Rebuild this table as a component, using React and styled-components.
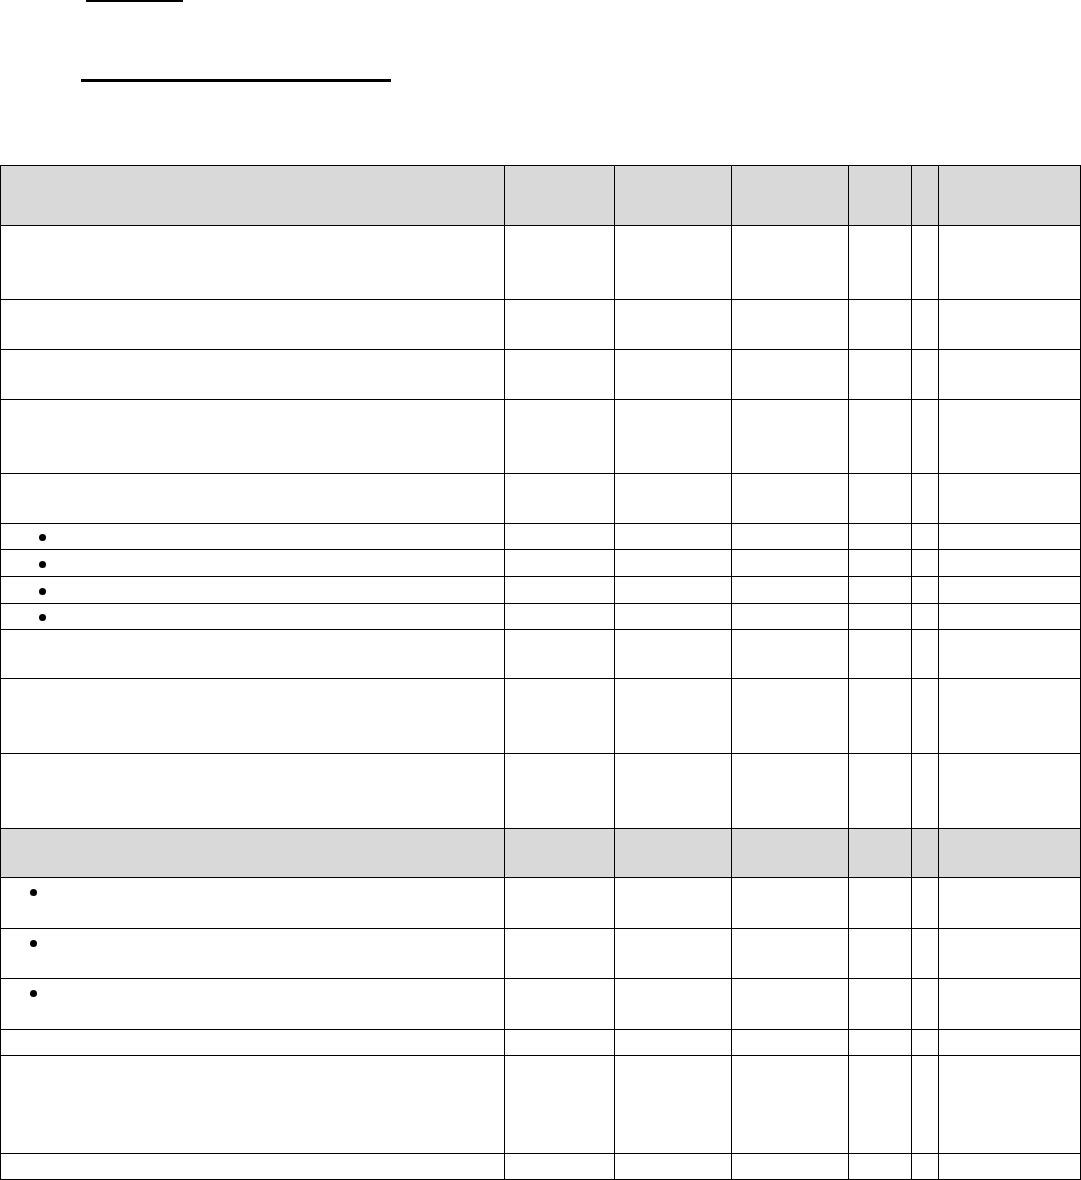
import React from "react";
import styled, { createGlobalStyle } from "styled-components";

const Global = createGlobalStyle`
  html, body { margin: 0; padding: 0; background: #ffffff; }
  body { font-family: "Liberation Sans", Arial, sans-serif; font-size: 14px; color: #000; }
`;

const Page = styled.div`
  width: 1081px;
  display: flex;
  flex-direction: column;
`;

const Heading = styled.div`
  margin-left: ${(p) => p.$left}px;
  margin-top: ${(p) => p.$top}px;
  width: ${(p) => p.$width}px;
  height: ${(p) => p.$height}px;
  border-bottom: ${(p) => p.$thick}px solid #000;
  box-sizing: border-box;
  color: transparent;
  font-size: 0;
  line-height: 0;
`;

const Table = styled.div`
  margin-top: ${(p) => p.$top}px;
  border-top: 1px solid #000;
  border-left: 1px solid #000;
  display: flex;
  flex-direction: column;
`;

const COLS = "504px 110px 117px 117px 63px 27px 142px";

const Row = styled.div`
  display: grid;
  grid-template-columns: ${COLS};
  height: ${(p) => p.$h}px;
  background: ${(p) => (p.$shade ? "#d9d9d9" : "#ffffff")};
`;

const Cell = styled.div`
  box-sizing: border-box;
  border-right: 1px solid #000;
  border-bottom: 1px solid #000;
  display: flex;
  align-items: ${(p) => (p.$kind === "outer" ? "flex-start" : "center")};
  padding-left: ${(p) => (p.$kind === "outer" ? 29 : p.$kind === "inner" ? 38 : 0)}px;
  padding-top: ${(p) => (p.$kind === "outer" ? 11 : 0)}px;
`;

const Bullet = styled.span`
  display: inline-block;
  width: 7px;
  height: 7px;
  border-radius: 50%;
  background: #000;
  margin-top: ${(p) => (p.$kind === "inner" ? 2 : 0)}px;
`;

const rows = [
  { h: 60, shade: true },
  { h: 74 },
  { h: 50 },
  { h: 50 },
  { h: 74 },
  { h: 50 },
  { h: 26, bullet: "inner" },
  { h: 27, bullet: "inner" },
  { h: 27, bullet: "inner" },
  { h: 26, bullet: "inner" },
  { h: 49 },
  { h: 75 },
  { h: 75 },
  { h: 49, shade: true },
  { h: 51, bullet: "outer" },
  { h: 50, bullet: "outer" },
  { h: 51, bullet: "outer" },
  { h: 26 },
  { h: 98 },
  { h: 26 },
];

export default function App() {
  return (
    <Page>
      <Global />
      <Heading $left={86} $top={0} $width={97} $height={2} $thick={2} />
      <Heading $left={81} $top={77} $width={310} $height={3} $thick={3} />
      <Table $top={83}>
        {rows.map((r, i) => (
          <Row key={i} $h={r.h} $shade={r.shade}>
            <Cell $kind={r.bullet}>
              {r.bullet && <Bullet $kind={r.bullet} />}
            </Cell>
            <Cell />
            <Cell />
            <Cell />
            <Cell />
            <Cell />
            <Cell />
          </Row>
        ))}
      </Table>
    </Page>
  );
}
